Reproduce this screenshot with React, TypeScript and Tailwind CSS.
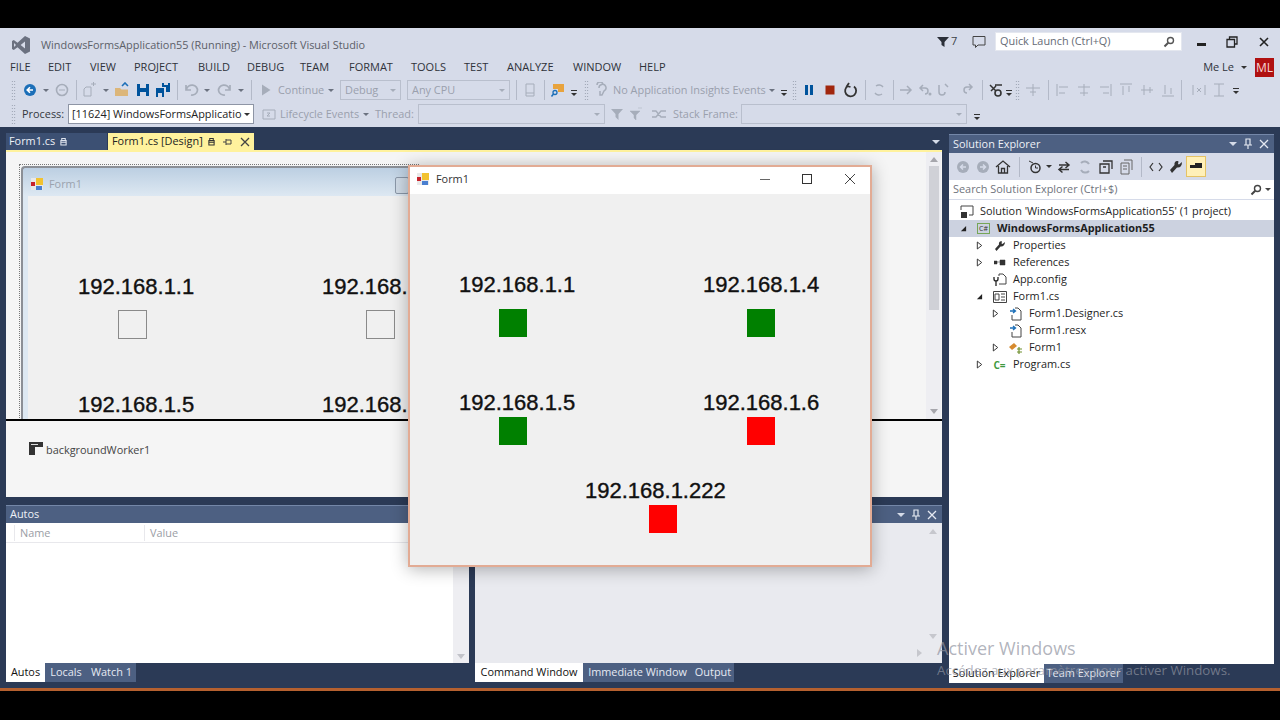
import React from 'react';

const OFF = '#a6adba';

// small svg wrapper, all toolbar icons are drawn on a 16px box
const Ico = ({ children, className = '' }: { children: React.ReactNode; className?: string }) => (
  <svg viewBox="0 0 16 16" width="16" height="16" className={`shrink-0 ${className}`}>
    {children}
  </svg>
);

const Grip = ({ className = '' }: { className?: string }) => (
  <div className={`w-[5px] h-[20px] shrink-0 bg-[radial-gradient(#8f96a6_0.7px,transparent_0.8px)] bg-[length:2.5px_3px] ${className}`} />
);
const Sep = ({ className = '' }: { className?: string }) => (
  <div className={`flex justify-center shrink-0 ${className}`}><div className="w-px h-[20px] bg-[#b3b9c8]" /></div>
);
const Caret = ({ className = '', color = 'border-t-[#6b7280]' }: { className?: string; color?: string }) => (
  <div className={`flex justify-center shrink-0 ${className}`}>
    <div className={`w-0 h-0 border-x-[3px] border-x-transparent border-t-[3px] ${color}`} />
  </div>
);
const Overflow = ({ className = '' }: { className?: string }) => (
  <div className={`flex flex-col items-center shrink-0 pt-[6px] ${className}`}>
    <div className="w-[6px] h-px bg-[#333]" />
    <div className="mt-[2px] w-0 h-0 border-x-[3px] border-x-transparent border-t-[3px] border-t-[#333]" />
  </div>
);
const Combo = ({ label, className = '' }: { label?: string; className?: string }) => (
  <div className={`h-[20px] shrink-0 border border-[#b9bfcd] flex items-center justify-between pl-[4px] pr-[4px] text-[#9aa0ad] ${className}`}>
    <span>{label}</span>
    <div className="w-0 h-0 border-x-[3px] border-x-transparent border-t-[3px] border-t-[#a6adba]" />
  </div>
);

const AlignIcon = ({ d }: { d: string }) => (
  <Ico className="ml-[5px] w-[16px]">
    <path d={d} fill="none" stroke={OFF} strokeWidth="1" />
  </Ico>
);

const Chrome = () => (
  <div className="h-[99px] bg-[#d6dbe9] text-[10.9px] text-[#3c3f47] shrink-0">
    {/* title bar */}
    <div className="h-[29px] flex items-center pl-[11px] pt-[5px]">
      <svg viewBox="0 0 20 20" width="20" height="20" className="shrink-0">
        <path d="M14 1 L19 3.4 V16.6 L14 19 L6.5 12.2 L2.8 15 L1 14 V6 L2.8 5 L6.5 7.8 Z M14 6.4 L9.6 10 L14 13.6 Z M3 8 V12 L5 10 Z" fill="#6b7180" fillRule="evenodd" />
      </svg>
      <span className="ml-[10px] text-[#5c6068] whitespace-nowrap">WindowsFormsApplication55 (Running) - Microsoft Visual Studio</span>
      <div className="ml-auto flex items-center -mt-[7px]">
        <svg viewBox="0 0 12 12" width="12" height="12"><path d="M0 1 H12 L7.5 6 V11 L4.5 9 V6 Z" fill="#2b2f38" /></svg>
        <span className="ml-[2px] text-[11px] w-[14px]">7</span>
        <Ico className="ml-[6px]"><path d="M2 2.5 H14 V11 H7 L4.5 13.5 V11 H2 Z" fill="none" stroke="#444" strokeWidth="1" /></Ico>
        <div className="ml-[8px] w-[187px] h-[19px] bg-white border border-[#e4e7ef] flex items-center justify-between pl-[4px] pr-[6px] text-[#666b75]">
          <span>Quick Launch (Ctrl+Q)</span>
          <svg viewBox="0 0 12 12" width="12" height="12"><circle cx="7.5" cy="4.5" r="3" fill="none" stroke="#555" strokeWidth="1.4" /><path d="M5.2 6.8 L1.5 10.5" stroke="#555" strokeWidth="2" /></svg>
        </div>
        <div className="ml-[15px] w-[9px] h-[3px] bg-[#222] mt-[6px]" />
        <svg viewBox="0 0 12 12" width="12" height="12" className="ml-[20px]"><path d="M3.5 3.5 V1 H11 V8 H8.5 M1 3.5 H8.5 V11 H1 Z" fill="none" stroke="#222" strokeWidth="1.3" /></svg>
        <svg viewBox="0 0 12 12" width="12" height="12" className="ml-[20px] mr-[10px]"><path d="M2 2 L10 10 M10 2 L2 10" stroke="#222" strokeWidth="1.6" /></svg>
      </div>
    </div>
    {/* menu */}
    <div className="h-[21px] flex items-center text-[11px] text-[#2f323a]">
      <span className="ml-[10px] w-[38px]">FILE</span>
      <span className="w-[42px]">EDIT</span>
      <span className="w-[44px]">VIEW</span>
      <span className="w-[64px]">PROJECT</span>
      <span className="w-[49px]">BUILD</span>
      <span className="w-[53px]">DEBUG</span>
      <span className="w-[49px]">TEAM</span>
      <span className="w-[62px]">FORMAT</span>
      <span className="w-[53px]">TOOLS</span>
      <span className="w-[43px]">TEST</span>
      <span className="w-[66px]">ANALYZE</span>
      <span className="w-[66px]">WINDOW</span>
      <span>HELP</span>
      <span className="ml-auto text-[11px]">Me Le</span>
      <Caret className="w-[20px]" color="border-t-[#333]" />
      <div className="mr-[6px] ml-px w-[19px] h-[19px] bg-[#b01010] text-[#f5d5d5] text-[12px] flex items-center justify-center">ML</div>
    </div>
    {/* toolbar 1 */}
    <div className="h-[24px] flex items-center pl-[11px] text-[#9aa0ad] whitespace-nowrap">
      <Grip />
      <Ico className="ml-[6px]"><circle cx="8" cy="8" r="6" fill="#1c6fb8" /><path d="M11 8 H5.5 M8 5.2 L5.2 8 L8 10.8" stroke="#fff" strokeWidth="1.6" fill="none" /></Ico>
      <Caret className="w-[16px]" />
      <Ico><circle cx="8" cy="8" r="5.5" fill="none" stroke={OFF} strokeWidth="1.6" /><path d="M5 8 H11" stroke={OFF} /></Ico>
      <Sep className="w-[12px]" />
      <Ico><path d="M4 5 H9 V14 H2 V7 Z M9 2 H14 M11.5 0 V4" fill="none" stroke={OFF} /></Ico>
      <Caret className="w-[16px]" />
      <Ico><path d="M1 6 H6 L7.5 7.5 H14 V14 H1 Z" fill="#dcb67a" /><path d="M8 4 L11 1 L14 4" stroke="#1c6fb8" strokeWidth="1.6" fill="none" /></Ico>
      <Ico className="ml-[5px]"><path d="M2 2 H14 V14 H2 Z" fill="#00539c" /><path d="M5 2 H11 V6 H5 Z M5 10 H11 V14 H5 Z" fill="#d6dbe9" /></Ico>
      <Ico className="ml-[4px]"><path d="M1 6 H9 V15 H1 Z M7 1 H15 V10 H11 V5 H7 Z" fill="#00539c" /><path d="M3 11 H7 V15 H3 Z M9 1 H13 V3 H9 Z" fill="#d6dbe9" /></Ico>
      <Sep className="w-[12px]" />
      <Ico><path d="M3 3 V8 H8 M3.5 7.5 A5.5 5 0 1 1 8 13" fill="none" stroke={OFF} strokeWidth="1.7" /></Ico>
      <Caret className="w-[16px]" />
      <Ico className="ml-[2px]"><path d="M13 3 V8 H8 M12.5 7.5 A5.5 5 0 1 0 8 13" fill="none" stroke={OFF} strokeWidth="1.7" /></Ico>
      <Caret className="w-[16px]" />
      <Sep className="w-[4px]" />
      <Ico className="ml-[5px]"><path d="M4 2.5 L12.5 8 L4 13.5 Z" fill={OFF} /></Ico>
      <span className="ml-[4px] w-[46px]">Continue</span>
      <Caret className="w-[14px]" />
      <Combo label="Debug" className="ml-[2px] w-[61px]" />
      <Combo label="Any CPU" className="ml-[6px] w-[103px]" />
      <Sep className="w-[12px]" />
      <Ico><path d="M4 2 H12 V14 H4 Z M4 11 H12" fill="none" stroke={OFF} /></Ico>
      <Sep className="w-[12px]" />
      <Ico><path d="M3 2 H14 V10 H8 V7 H3 Z" fill="#e8a33d" /><circle cx="5" cy="10.5" r="2" fill="none" stroke="#1c6fb8" strokeWidth="1.3" /><path d="M3.5 12 L1.5 14.5" stroke="#1c6fb8" strokeWidth="1.5" /></Ico>
      <Overflow className="w-[16px]" />
      <Grip className="ml-[2px]" />
      <Ico className="ml-[3px]"><path d="M5 3 A3 3 0 0 1 11 3 M7 6 A3.5 3.5 0 1 1 12 9 L10 13 H8 V9" fill="none" stroke={OFF} strokeWidth="1.5" /></Ico>
      <span className="ml-[5px] w-[151px]">No Application Insights Events</span>
      <Caret className="w-[16px]" />
      <Overflow className="w-[8px]" />
      <Grip className="ml-[4px]" />
      <Ico className="ml-[4px]"><path d="M4 3 H7 V13 H4 Z M9 3 H12 V13 H9 Z" fill="#00539c" /></Ico>
      <Ico className="ml-[5px]"><path d="M3.5 3.5 H12.5 V12.5 H3.5 Z" fill="#a1260d" /></Ico>
      <Ico className="ml-[5px]"><path d="M6 1 L4 4 L7.5 5 M5 4 A5.5 5.5 0 1 0 11 4.5" fill="none" stroke="#333" strokeWidth="1.8" /></Ico>
      <Sep className="w-[12px]" />
      <Ico><path d="M5 4 A5 5 0 0 1 12 5 M11 12 A5 5 0 0 1 4 11" fill="none" stroke={OFF} strokeWidth="1.4" /></Ico>
      <Sep className="w-[12px]" />
      <Ico className="-ml-[1px]"><path d="M2 8 H13 M9 4 L13 8 L9 12" fill="none" stroke={OFF} strokeWidth="1.5" /></Ico>
      <Ico className="ml-[3px]"><path d="M6 3 L3 6 L6 9 M3 6 H8 A3 3 0 0 1 8 12" fill="none" stroke={OFF} strokeWidth="1.5" /><circle cx="13" cy="12" r="1.5" fill={OFF} /></Ico>
      <Ico className="ml-[2px]"><path d="M4 3 V10 A3 3 0 0 0 10 10 M10 2 L13 5" fill="none" stroke={OFF} strokeWidth="1.5" /></Ico>
      <Ico className="ml-[8px]"><path d="M13 5 H8 A3 3 0 0 0 8 11 M10 2 L13 5 L10 8" fill="none" stroke={OFF} strokeWidth="1.5" /></Ico>
      <Sep className="w-[14px]" />
      <Ico className="-ml-[1px]"><path d="M2 3 L8 9 M7 3 L14 3 M8 4 L3 9" stroke="#333" strokeWidth="1.5" fill="none" /><circle cx="10" cy="11" r="3" fill="none" stroke="#333" strokeWidth="1.6" /></Ico>
      <Overflow className="w-[10px]" />
      <Grip className="ml-[1px]" />
      <Ico className="ml-[5px]"><path d="M1 6 H15 M8 2 V14 M5 10 H11" stroke={OFF} fill="none" /></Ico>
      <Sep className="w-[14px]" />
      <Ico><path d="M2 2 V14 M4 5 H13 M4 11 H10" stroke={OFF} fill="none" /></Ico>
      <AlignIcon d="M8 2 V14 M2 5 H14 M4 11 H12" />
      <AlignIcon d="M14 2 V14 M3 5 H12 M6 11 H12" />
      <AlignIcon d="M2 2 H14 M5 4 V13 M11 4 V10" />
      <AlignIcon d="M2 8 H14 M5 3 V13 M11 5 V11" />
      <AlignIcon d="M2 14 H14 M5 3 V12 M11 6 V12" />
      <Sep className="w-[10px]" />
      <AlignIcon d="M2 3 V13 M14 3 V13 M6 6 L10 10 M10 6 L6 10" />
      <Ico className="ml-[4px]"><path d="M3 2 H13 M3 14 H13 M8 2 V14" stroke={OFF} fill="none" /></Ico>
      <Overflow className="w-[14px] ml-[2px] -mt-[4px]" />
    </div>
    {/* toolbar 2 */}
    <div className="h-[24px] flex items-center pl-[11px] text-[#9aa0ad] whitespace-nowrap">
      <Grip />
      <span className="ml-[6px] w-[46px] text-[#333740]">Process:</span>
      <div className="w-[186px] h-[20px] bg-white border border-[#8e95a5] flex items-center justify-between pl-[3px] pr-[3px] text-[#222]">
        <span className="w-[170px] overflow-hidden">[11624] WindowsFormsApplication55.exe</span>
        <div className="w-0 h-0 border-x-[3px] border-x-transparent border-t-[3px] border-t-[#333]" />
      </div>
      <Ico className="ml-[7px]"><path d="M2 4 H14 V13 H2 Z M6 7 L9 7 L6 10 L9 10" fill="none" stroke={OFF} /></Ico>
      <span className="ml-[3px] w-[78px]">Lifecycle Events</span>
      <Caret className="w-[16px]" />
      <span className="ml-px w-[43px]">Thread:</span>
      <Combo className="w-[187px]" />
      <Ico className="ml-[4px]"><path d="M2 3 H14 L9.5 8 V14 L6.5 11 V8 Z" fill={OFF} /></Ico>
      <Ico className="ml-[3px]"><path d="M2 5 H12 L8 9 V14 L6 12 V9 Z M10 2 H14" fill={OFF} stroke={OFF} strokeWidth="0.5" /></Ico>
      <Ico className="ml-[7px]"><path d="M1 5 H5 L10 11 H15 M1 11 H5 L10 5 H15" fill="none" stroke={OFF} strokeWidth="1.3" /></Ico>
      <span className="ml-[6px] w-[68px]">Stack Frame:</span>
      <Combo className="w-[226px]" />
      <Overflow className="w-[18px] ml-px" />
    </div>
  </div>
);

const PanelButtons = () => (
  <div className="flex items-center text-[#d5dbe8]">
    <div className="w-0 h-0 border-x-[4px] border-x-transparent border-t-[4px] border-t-[#d5dbe8]" />
    <svg viewBox="0 0 10 12" width="10" height="12" className="ml-[6px]"><path d="M3 1 H7 V7 H3 Z M1 7 H9 M5 7 V11" fill="none" stroke="#e5e9f2" strokeWidth="1.2" /></svg>
    <svg viewBox="0 0 10 10" width="10" height="10" className="ml-[6px] mr-[5px]"><path d="M1 1 L9 9 M9 1 L1 9" stroke="#e5e9f2" strokeWidth="1.3" /></svg>
  </div>
);

const BottomTab = ({ label, active, w }: { label: string; active?: boolean; w: string }) => (
  <div className={`h-[19px] pb-px flex items-center justify-center whitespace-nowrap text-[10.9px] ${w} ${active ? 'bg-white text-[#111]' : 'bg-[#4d6082] text-[#e6eaf3]'}`}>{label}</div>
);

const FormIcon = () => (
  <svg viewBox="0 0 12 12" width="12" height="12" className="shrink-0">
    <path d="M0 0 H12 V12 H0 Z" fill="#e9e9e9" />
    <path d="M5 0 H12 V7 H5 Z" fill="#f2c230" />
    <path d="M0 4 H4 V8 H0 Z" fill="#c8232c" />
    <path d="M5 8 H11 V12 H5 Z" fill="#4a7fd0" />
  </svg>
);

const Ip = ({ text, className }: { text: string; className: string }) => (
  <div className={`absolute text-[22px] leading-[24px] text-[#111] font-['Liberation_Sans',Arial,sans-serif] whitespace-nowrap [-webkit-text-stroke:0.4px_#111] ${className}`}>{text}</div>
);
const Lamp = ({ className }: { className: string }) => (
  <div className={`absolute w-[28px] h-[28px] ${className}`} />
);

const Designer = () => (
  <div className="h-[347px] bg-[#f5f5f5] border-t-2 border-[#fff29d] flex flex-col shrink-0">
    <div className="h-[267px] flex overflow-hidden shrink-0">
      {/* form on the design surface, free canvas */}
      <div className="relative flex-1 overflow-hidden">
        <div className="absolute left-[13px] top-[12px] w-[400px] h-[300px] border-l border-t border-dotted border-[#777]" />
        <div className="absolute left-[15px] top-[14px] w-[400px] h-[300px] rounded-tl-[4px] border-l-2 border-t-2 border-[#8b8f96] bg-[linear-gradient(#bccfe2,#dde8f2_28px)]">
          <div className="flex items-center h-[28px] pl-[8px] pt-[4px] text-[#9ba2ad] text-[10.9px]">
            <FormIcon />
            <span className="ml-[6px]">Form1</span>
          </div>
          <div className="absolute left-[5px] right-0 top-[28px] bottom-0 bg-[#f0f0f0]" />
          <div className="absolute left-[372px] top-[9px] w-[14px] h-[17px] rounded-[2px] border border-[#8a97a8] bg-[#cfdae6]" />
        </div>
        <Ip className="left-[72px] top-[123px]" text="192.168.1.1" />
        <Ip className="left-[316px] top-[123px]" text="192.168.1.4" />
        <Ip className="left-[72px] top-[241px]" text="192.168.1.5" />
        <Ip className="left-[316px] top-[241px]" text="192.168.1.6" />
        <div className="absolute left-[112px] top-[158px] w-[29px] h-[29px] border border-[#8a8a8a]" />
        <div className="absolute left-[360px] top-[158px] w-[29px] h-[29px] border border-[#8a8a8a]" />
      </div>
      {/* scrollbar */}
      <div className="w-[15px] mr-px bg-[#eeeef2] flex flex-col items-center py-[5px]">
        <div className="w-0 h-0 border-x-[4px] border-x-transparent border-b-[5px] border-b-[#a6a6ac]" />
        <div className="mt-[4px] w-[10px] h-[144px] bg-[#d0d1d7]" />
        <div className="mt-auto w-0 h-0 border-x-[4px] border-x-transparent border-t-[5px] border-t-[#a6a6ac]" />
      </div>
    </div>
    <div className="h-[2px] bg-black shrink-0" />
    <div className="flex items-start pl-[23px] pt-[19px] text-[10.9px] text-[#444]">
      <svg viewBox="0 0 14 14" width="14" height="14" className="mt-px"><path d="M0 1 H14 V6 H6 V14 H0 Z" fill="#333" /><path d="M2 3 H9 V4 H2 Z" fill="#ddd" /></svg>
      <span className="ml-[3px] mt-[2px]">backgroundWorker1</span>
    </div>
  </div>
);

const FloatingForm = () => (
  <div className="absolute left-[408px] top-[165px] w-[464px] h-[402px] border-2 border-[#e2ab94] bg-[#f0f0f0] shadow-[0_2px_16px_rgba(0,0,0,0.3)]">
    <div className="h-[27px] pb-[3px] bg-white flex items-center pl-[7px] text-[10.9px] text-[#333]">
      <FormIcon />
      <span className="ml-[7px]">Form1</span>
      <div className="ml-auto w-[10px] h-px bg-[#666]" />
      <div className="ml-[32px] w-[10px] h-[10px] border border-[#333]" />
      <svg viewBox="0 0 10 10" width="10" height="10" className="ml-[33px] mr-[15px]"><path d="M0 0 L10 10 M10 0 L0 10" stroke="#444" strokeWidth="1" /></svg>
    </div>
    <Ip className="left-[49px] top-[106px]" text="192.168.1.1" />
    <Ip className="left-[293px] top-[106px]" text="192.168.1.4" />
    <Ip className="left-[49px] top-[224px]" text="192.168.1.5" />
    <Ip className="left-[293px] top-[224px]" text="192.168.1.6" />
    <Ip className="left-[175px] top-[312px]" text="192.168.1.222" />
    <Lamp className="left-[89px] top-[142px] bg-[#008000]" />
    <Lamp className="left-[337px] top-[142px] bg-[#008000]" />
    <Lamp className="left-[89px] top-[250px] bg-[#008000]" />
    <Lamp className="left-[337px] top-[250px] bg-[#ff0000]" />
    <Lamp className="left-[239px] top-[338px] bg-[#ff0000]" />
  </div>
);

const Row = ({ indent, arrow, icon, label, bold, selected }: { indent: string; arrow?: 'open' | 'closed'; icon?: React.ReactNode; label: string; bold?: boolean; selected?: boolean }) => (
  <div className={`h-[17px] flex items-center text-[10.9px] text-[#1e1e1e] ${selected ? 'bg-[#ccd2e0]' : ''}`}>
    <div className={`flex items-center justify-center shrink-0 w-[12px] ${indent}`}>
      {arrow === 'closed' && <svg viewBox="0 0 8 10" width="7" height="9"><path d="M1.5 1 L6.5 5 L1.5 9 Z" fill="none" stroke="#333" strokeWidth="1.1" /></svg>}
      {arrow === 'open' && <svg viewBox="0 0 8 8" width="7" height="7"><path d="M7 1 V7 H1 Z" fill="#222" /></svg>}
    </div>
    <div className="w-[17px] ml-[6px] flex justify-center shrink-0">{icon}</div>
    <span className={`ml-[5px] whitespace-nowrap ${bold ? 'font-bold' : ''}`}>{label}</span>
  </div>
);

const Wrench = () => <svg viewBox="0 0 12 12" width="12" height="12"><path d="M11 2 L8.5 4 L7.5 3.5 L8 1.5 C6 0.5 4.5 2.5 5 4.5 L1 9 L2.5 11 L6.5 6.5 C9 7 11 5 11 2 Z" fill="#333" /></svg>;
const FileArrow = () => <svg viewBox="0 0 14 14" width="14" height="14"><path d="M6 1 H9 L12 4 V13 H3 V8" fill="none" stroke="#444" /><path d="M1 4 H6 M4 2 L6.5 4 L4 6" stroke="#1c6fb8" strokeWidth="1.3" fill="none" /></svg>;

const SolutionExplorer = () => (
  <div className="w-[325px] h-[549px] mt-px flex flex-col shrink-0">
    <div className="h-[19px] bg-[#4d6082] border-t border-[#7487a8] flex items-center justify-between pl-[4px] text-[10.9px] text-[#eef1f7]">
      <span>Solution Explorer</span>
      <PanelButtons />
    </div>
    <div className="h-[27px] bg-[#d6dbe9] flex items-center pl-[6px]">
      <Ico><circle cx="8" cy="8" r="6" fill={OFF} /><path d="M11 8 H5.5 M8 5.5 L5.5 8 L8 10.5" stroke="#d6dbe9" strokeWidth="1.5" fill="none" /></Ico>
      <Ico className="ml-[4px]"><circle cx="8" cy="8" r="6" fill={OFF} /><path d="M5 8 H10.5 M8 5.5 L10.5 8 L8 10.5" stroke="#d6dbe9" strokeWidth="1.5" fill="none" /></Ico>
      <Ico className="ml-[4px]"><path d="M1 8 L8 2 L15 8 M3.5 7 V14 H12.5 V7 M6.5 14 V9.5 H9.5 V14" fill="none" stroke="#333" strokeWidth="1.3" /></Ico>
      <Sep className="w-[16px]" />
      <Ico><circle cx="8.5" cy="9" r="4.5" fill="none" stroke="#333" strokeWidth="1.5" /><path d="M8.5 6.5 V9 H11 M2 2 L6 4" stroke="#333" fill="none" /></Ico>
      <Caret className="w-[12px]" color="border-t-[#333]" />
      <Ico className="ml-[1px]"><path d="M3 6 H12 M9.5 3 L13 6 L9.5 9 M13 10.5 H4 M6.5 7.5 L3 10.5 L6.5 13.5" fill="none" stroke="#333" strokeWidth="1.5" /></Ico>
      <Ico className="ml-[5px]"><path d="M4 4 A5 5 0 0 1 12 5 M12 12 A5 5 0 0 1 4 11" fill="none" stroke={OFF} strokeWidth="2" /></Ico>
      <Ico className="ml-[5px]"><path d="M5 2 H14 V10 M2 5 H11 V14 H2 Z M5 8 H8" fill="none" stroke="#333" strokeWidth="1.3" /></Ico>
      <Ico className="ml-[5px]"><path d="M5 1 H13 V11 M2 4 H10 V15 H2 Z M4 7 H8 M4 10 H8" fill="none" stroke="#666" /></Ico>
      <Sep className="w-[13px]" />
      <Ico><path d="M5 4 L2 8 L5 12 M11 4 L14 8 L11 12" fill="none" stroke="#333" strokeWidth="1.2" /></Ico>
      <Ico className="ml-[4px]"><path d="M14 3 L11 5.5 L10 5 L10.5 2.5 C8 1 6 3.5 6.5 6 L2 11 L4 14 L9 8.5 C12 9 14 7 14 3 Z" fill="#333" /></Ico>
      <div className="ml-[2px] w-[20px] h-[21px] bg-[#fff0b8] border border-[#e5c365] flex items-center justify-center">
        <div className="w-[12px] h-[3px] bg-[#222] relative"><div className="absolute right-0 -top-[2px] w-[7px] h-[2px] bg-[#222]" /></div>
      </div>
    </div>
    <div className="h-[19px] bg-white flex items-center justify-between pl-[4px] pr-[3px] text-[10.9px] text-[#70747d]">
      <span>Search Solution Explorer (Ctrl+$)</span>
      <div className="flex items-center">
        <svg viewBox="0 0 12 12" width="12" height="12"><circle cx="7.5" cy="4.5" r="3" fill="none" stroke="#444" strokeWidth="1.4" /><path d="M5.2 6.8 L1.5 10.5" stroke="#444" strokeWidth="2" /></svg>
        <div className="ml-[3px] w-0 h-0 border-x-[3px] border-x-transparent border-t-[3px] border-t-[#444]" />
      </div>
    </div>
    <div className="flex-1 bg-white pt-[3px] border-t border-[#d6dbe9]">
      <Row indent="-ml-[9px]" icon={<svg viewBox="0 0 14 14" width="14" height="14"><path d="M1 5 V1 H13 V10 H9" fill="none" stroke="#444" /><path d="M1 7 H7 V13 H1 Z" fill="#333" /></svg>} label="Solution 'WindowsFormsApplication55' (1 project)" />
      <Row selected indent="ml-[8px]" arrow="open" icon={<div className="w-[13px] h-[11px] border border-[#76a657] text-[7px] leading-[9px] text-center text-[#333]">C#</div>} label="WindowsFormsApplication55" bold />
      <Row indent="ml-[24px]" arrow="closed" icon={<Wrench />} label="Properties" />
      <Row indent="ml-[24px]" arrow="closed" icon={<svg viewBox="0 0 12 8" width="12" height="8"><path d="M0 2 H3 V5 H0 Z M6 1 H11 V6 H6 Z M3 3 H6" fill="#333" stroke="#333" strokeWidth="0.5" /></svg>} label="References" />
      <Row indent="ml-[24px]" icon={<svg viewBox="0 0 14 14" width="14" height="14"><path d="M6 3 V1 H10 L13 4 V11 H6" fill="none" stroke="#444" /><path d="M1 4 V6 A2 2 0 0 0 5 6 V4 M3 8 V13" stroke="#222" fill="none" strokeWidth="1.3" /></svg>} label="App.config" />
      <Row indent="ml-[24px]" arrow="open" icon={<svg viewBox="0 0 14 12" width="14" height="12"><path d="M0.5 0.5 H13.5 V11.5 H0.5 Z M2 3 H6 V9 H2 Z M8 3 H12 M8 6 H12 M8 9 H12" fill="none" stroke="#444" /></svg>} label="Form1.cs" />
      <Row indent="ml-[40px]" arrow="closed" icon={<FileArrow />} label="Form1.Designer.cs" />
      <Row indent="ml-[40px]" icon={<FileArrow />} label="Form1.resx" />
      <Row indent="ml-[40px]" arrow="closed" icon={<svg viewBox="0 0 14 12" width="14" height="12"><path d="M0 5 L5 1 L8 4 L3 8 Z" fill="#d68a2e" /><path d="M8 7 H13 M8 10 H13 M10 5 V12" stroke="#6f8f2e" strokeWidth="1.2" /></svg>} label="Form1" />
      <Row indent="ml-[24px]" arrow="closed" icon={<span className="text-[10px] font-bold text-[#3f9a3f] leading-none">C=</span>} label="Program.cs" />
    </div>
    <div className="flex">
      <BottomTab active label="Solution Explorer" w="w-[95px]" />
      <BottomTab label="Team Explorer" w="w-[79px]" />
    </div>
  </div>
);

const BottomPanels = () => (
  <div className="flex gap-[6px] mt-[8px]">
    <div className="w-[463px] flex flex-col">
      <div className="h-[18px] pb-px bg-[#4d6082] border-t border-[#7487a8] flex items-center pl-[4px] text-[10.9px] text-[#eef1f7]">Autos</div>
      <div className="h-[140px] bg-white flex">
        <div className="flex-1">
          <div className="h-[20px] pt-px border-b border-[#e8e8ec] flex items-center text-[10.9px] text-[#9a9da5]">
            <span className="ml-[8px] w-[130px] pl-[5px] border-l border-[#e8e8ec]">Name</span>
            <span className="pl-[5px] border-l border-[#e8e8ec]">Value</span>
          </div>
        </div>
        <div className="w-[16px] bg-[#eeeef2] flex flex-col items-center justify-end pb-[4px]">
          <div className="w-0 h-0 border-x-[4px] border-x-transparent border-t-[5px] border-t-[#c2c3c9]" />
        </div>
      </div>
      <div className="flex">
        <BottomTab active label="Autos" w="w-[39px]" />
        <BottomTab label="Locals" w="w-[42px]" />
        <BottomTab label="Watch 1" w="w-[49px]" />
      </div>
    </div>
    <div className="w-[467px] flex flex-col">
      <div className="h-[18px] bg-[#4d6082] border-t border-[#7487a8] flex items-center justify-end">
        <PanelButtons />
      </div>
      <div className="h-[140px] bg-[#e9eaef] flex flex-col items-end pr-[5px] pt-[6px]">
        <div className="w-0 h-0 border-x-[4px] border-x-transparent border-b-[5px] border-b-[#c6c7cd]" />
        <div className="mt-[100px] w-0 h-0 border-x-[4px] border-x-transparent border-t-[5px] border-t-[#c6c7cd]" />
        <div className="mt-[10px] mr-[15px] w-0 h-0 border-y-[4px] border-y-transparent border-l-[5px] border-l-[#c6c7cd]" />
      </div>
      <div className="flex">
        <BottomTab active label="Command Window" w="w-[108px]" />
        <BottomTab label="Immediate Window" w="w-[109px]" />
        <BottomTab label="Output" w="w-[42px]" />
      </div>
    </div>
  </div>
);

const LockIcon = ({ className = '', color }: { className?: string; color: string }) => (
  <svg viewBox="0 0 8 10" width="7" height="9" className={className}>
    <path d="M2 4 V1.5 H6 V4 M1 4 H7 V9 H1 Z" fill="none" stroke={color} strokeWidth="1.2" />
    <path d="M1 6 H7" stroke={color} />
  </svg>
);

export default function App() {
  return (
    <div className="relative w-[1280px] h-[720px] bg-black overflow-hidden pt-[28px] font-['Open_Sans',sans-serif]">
      <div className="h-[660px] bg-[#2b3a56] flex flex-col">
        <Chrome />
        <div className="flex gap-[7px] pl-[6px] pt-[6px]">
          <div className="w-[936px] shrink-0 flex flex-col">
            <div className="h-[17px] flex items-stretch text-[10.9px] shrink-0 whitespace-nowrap">
              <div className="w-[101px] bg-[#3c5073] flex items-center pl-[3px] text-[#eef1f7]">
                <span>Form1.cs</span>
                <LockIcon className="ml-[5px]" color="#dfe4ee" />
              </div>
              <div className="ml-px w-[146px] bg-[#fff29d] flex items-center pl-[4px] text-[#222]">
                <span>Form1.cs [Design]</span>
                <LockIcon className="ml-[5px]" color="#333" />
                <svg viewBox="0 0 10 10" width="10" height="10" className="ml-[8px]"><path d="M3 2 V8 M3 5 H0 M3 3 H8 V7 H3" fill="none" stroke="#444" /></svg>
                <svg viewBox="0 0 10 10" width="10" height="10" className="ml-[7px]"><path d="M1 1 L9 9 M9 1 L1 9" stroke="#444" strokeWidth="1.3" /></svg>
              </div>
              <div className="ml-auto flex items-center pr-[2px]">
                <div className="w-0 h-0 border-x-[4px] border-x-transparent border-t-[4px] border-t-[#d5dbe8]" />
              </div>
            </div>
            <Designer />
            <BottomPanels />
          </div>
          <SolutionExplorer />
        </div>
      </div>
      <div className="h-[3px] bg-[#b5602f]" />
      <FloatingForm />
      {/* windows activation watermark */}
      <div className="absolute left-[937px] top-[636px] text-[#8f93a0]/70 pointer-events-none whitespace-nowrap">
        <div className="text-[18px] leading-[24px]">Activer Windows</div>
        <div className="text-[13.3px] leading-[20px]">Accédez aux paramètres pour activer Windows.</div>
      </div>
    </div>
  );
}
